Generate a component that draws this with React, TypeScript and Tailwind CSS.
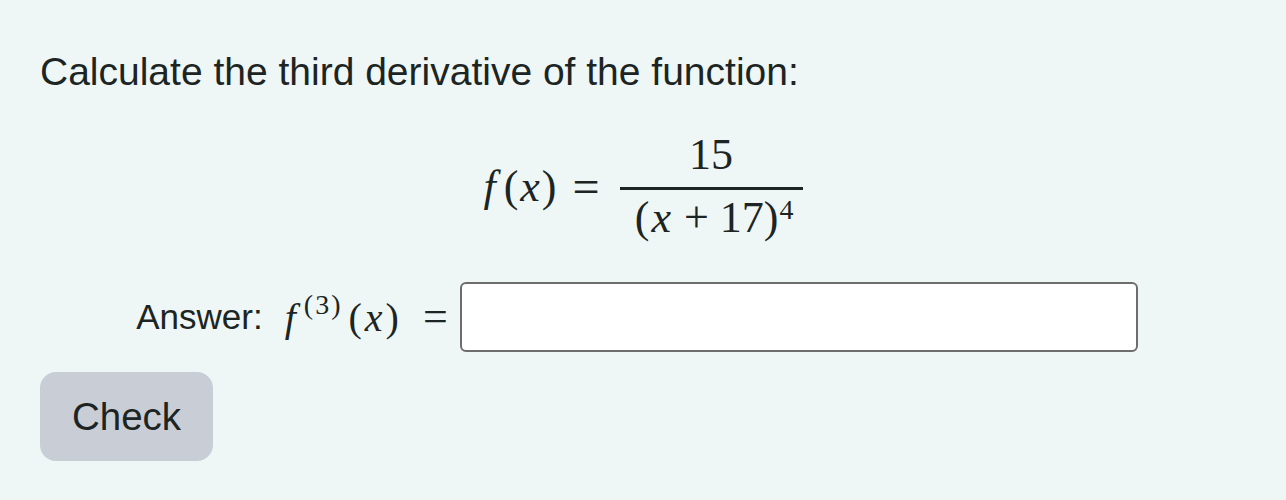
import React from 'react';

const serif = { fontFamily: '"Liberation Serif", "DejaVu Serif", serif' };

const App: React.FC = () => {
    return (
        <div className="min-h-[500px] w-full bg-[#eff7f6] px-10 pt-[50px] text-[#1c2523] font-['Liberation_Sans',Arial,sans-serif]">
            <p className="text-[39px] leading-[44px]">
                Calculate the third derivative of the function:
            </p>

            {/* display formula */}
            <div className="mt-[37px] flex items-center justify-center text-[44px]" style={serif}>
                <span className="mr-[16px] whitespace-nowrap">
                    <i className="mr-[8px]">f</i>(<i className="mx-[2px]">x</i>)
                </span>
                <span className="mr-[20px] text-[48px]">=</span>
                <span className="inline-flex flex-col items-center">
                    <span className="px-[2px] leading-[48px] mb-[8px]">15</span>
                    <span className="h-[3px] w-[183px] bg-[#1c2523]"/>
                    <span className="leading-[48px] mt-[4px] pl-[6px]">
                        (<i className="mx-[2px]">x</i> + 17)<sup className="text-[28px] -top-[13px] ml-[1px]">4</sup>
                    </span>
                </span>
            </div>

            {/* answer row */}
            <div className="mt-[40px] flex items-center justify-center pr-[12px]">
                <span className="text-[35px] mr-[22px]">Answer:</span>
                <span className="text-[40px] mr-[12px] whitespace-nowrap" style={serif}>
                    <i>f</i>
                    <sup className="text-[28px] -top-[17px] ml-[8px] tracking-[2px]">(3)</sup>
                    <span className="ml-[6px]">(<i className="mx-[3px]">x</i>)</span>
                    <span className="ml-[24px] text-[44px]">=</span>
                </span>
                <input
                    type="text"
                    className="h-[70px] w-[678px] rounded-[6px] border-2 border-[#6d6d6d] bg-white outline-none"
                />
            </div>

            <button className="mt-[20px] h-[89px] w-[173px] rounded-[16px] bg-[#c9ced6] text-[38.5px] text-[#1c2523]">
                Check
            </button>
        </div>
    );
};

export default App;
